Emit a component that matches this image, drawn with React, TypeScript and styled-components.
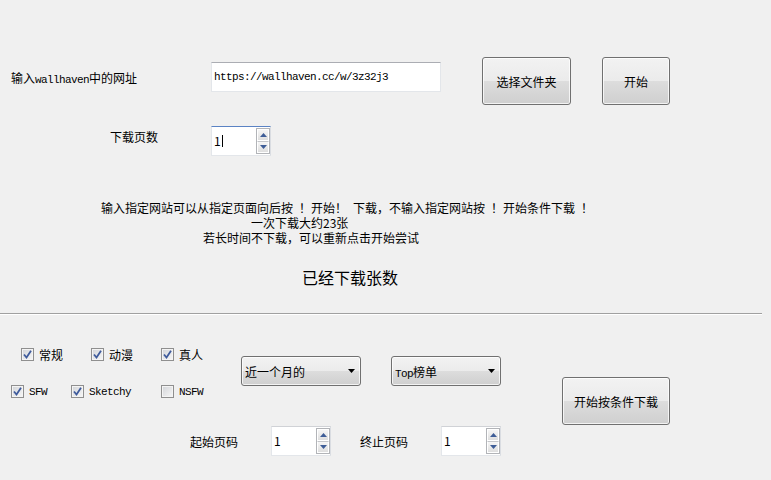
import React from 'react';
import styled, { createGlobalStyle } from 'styled-components';

const GlobalStyle = createGlobalStyle`
  html, body {
    margin: 0;
    padding: 0;
    background: #f0f0f0;
  }
  * {
    box-sizing: border-box;
  }
`

const Page = styled.div`
  width: 771px;
  height: 480px;
  overflow: hidden;
  background: #f0f0f0;
  font-family: "Noto Sans CJK SC", "Noto Sans", sans-serif;
  font-size: 12px;
  color: #000;
`

const Mono = styled.span`
  font-family: "Liberation Mono", monospace;
  font-size: 11px;
  letter-spacing: -0.6px;
`

const TopSection = styled.section`
  padding-top: 57px;
`

const Row = styled.div<{ $top?: number; $indent?: number; $align?: string }>`
  display: flex;
  align-items: ${p => p.$align || 'flex-start'};
  margin-top: ${p => p.$top || 0}px;
  padding-left: ${p => p.$indent || 0}px;
`

const FieldLabel = styled.span<{ $width: number; $indent?: number; $top?: number; $gap?: number }>`
  width: ${p => p.$width}px;
  padding-left: ${p => p.$indent || 0}px;
  margin-top: ${p => p.$top || 0}px;
  margin-left: ${p => p.$gap || 0}px;
  line-height: 16px;
  white-space: nowrap;
  flex-shrink: 0;
`

const UrlInput = styled.input`
  width: 230px;
  height: 30px;
  margin: 5px 0 0;
  padding: 0 2px;
  background: #fff;
  border: 1px solid #e3e6ea;
  border-top-color: #abadb3;
  font-family: "Liberation Mono", monospace;
  font-size: 11px;
  letter-spacing: -0.6px;
  color: #000;
  outline: none;
`

const WinButton = styled.button<{ $width: number; $gap?: number; $top?: number }>`
  width: ${p => p.$width}px;
  height: 48px;
  margin-left: ${p => p.$gap || 0}px;
  margin-top: ${p => p.$top || 0}px;
  padding: 0;
  flex-shrink: 0;
  border: 1px solid #707070;
  border-radius: 3px;
  background: linear-gradient(#f2f2f2 0%, #ebebeb 50%, #dddddd 50%, #cfcfcf 100%);
  box-shadow: inset 0 0 0 1px rgba(255, 255, 255, 0.75);
  font-family: "Noto Sans CJK SC", sans-serif;
  font-size: 12px;
  color: #000;
`

const Numeric = styled.div<{ $focused?: boolean; $gap?: number }>`
  display: flex;
  width: 60px;
  height: 30px;
  margin-left: ${p => p.$gap || 0}px;
  flex-shrink: 0;
  background: #fff;
  border: 1px solid #e3e6ea;
  border-top-color: ${p => (p.$focused ? '#5b83c4' : '#d0d2d6')};
  border-right-color: #dadde2;
`

const NumericValue = styled.div`
  flex: 1;
  display: flex;
  align-items: center;
  padding-left: 2px;
  line-height: 14px;
`

const Caret = styled.span`
  display: inline-block;
  width: 1px;
  height: 12px;
  background: #000;
  margin-left: 1px;
`

const SpinColumn = styled.div`
  display: flex;
  flex-direction: column;
  width: 14px;
  margin: 1px 0 1px 0;
  border: 1px solid #b2b4b8;
`

const SpinButton = styled.div`
  flex: 1;
  display: flex;
  align-items: center;
  justify-content: center;
  background: linear-gradient(#f6f6f6, #dedede);
  border: 1px solid #fff;
  & + & {
    border-top: 1px solid #c4c6ca;
  }
`

const Notice = styled.div`
  margin-top: 44px;
  line-height: 15px;
`

const NoticeLine = styled.div<{ $indent: number }>`
  padding-left: ${p => p.$indent}px;
  white-space: pre;
  word-spacing: 3.3px;
`

const Count = styled.div`
  margin-top: 22px;
  padding-left: 302px;
  font-size: 16px;
  line-height: 20px;
`

const Separator = styled.hr`
  width: 762px;
  margin: 26px 0 0;
  height: 0;
  border: 0;
  border-top: 1px solid #a0a0a0;
  border-bottom: 1px solid #fff;
`

const FilterRow = styled.div`
  display: flex;
  align-items: flex-start;
  margin-top: 30px;
`

const CheckGroup = styled.div`
  display: flex;
  flex-direction: column;
  gap: 18px;
  width: 241px;
  flex-shrink: 0;
`

const CheckItem = styled.label<{ $width: number }>`
  display: flex;
  align-items: center;
  gap: 5px;
  width: ${p => p.$width}px;
  height: 19px;
  flex-shrink: 0;
  white-space: nowrap;
`

const CheckBox = styled.span`
  display: flex;
  align-items: center;
  justify-content: center;
  width: 13px;
  height: 13px;
  border: 1px solid #8f8f8f;
  background: linear-gradient(135deg, #d2d4d8, #f7f7f7);
  box-shadow: inset 0 0 0 1px #f4f4f4;
`

const Combo = styled.div<{ $width: number; $gap?: number }>`
  display: flex;
  align-items: center;
  justify-content: space-between;
  width: ${p => p.$width}px;
  height: 30px;
  margin-top: 11px;
  margin-left: ${p => p.$gap || 0}px;
  padding: 0 5px 0 3px;
  flex-shrink: 0;
  border: 1px solid #707070;
  border-radius: 3px;
  background: linear-gradient(#f2f2f2 0%, #ebebeb 50%, #dddddd 50%, #cfcfcf 100%);
  box-shadow: inset 0 0 0 1px rgba(255, 255, 255, 0.75);
  white-space: nowrap;
`

const Check = ({ on }: { on: boolean }) => (
  <CheckBox>
    {on && (
      <svg width="9" height="9" viewBox="0 0 9 9">
        <path d="M1 4.5 L3.5 7.5 L8 0.8" fill="none" stroke="#3f5b9c" strokeWidth="1.8" />
      </svg>
    )}
  </CheckBox>
)

const Arrow = ({ up }: { up?: boolean }) => (
  <svg width="7" height="4" viewBox="0 0 7 4">
    <polygon points={up ? '0,4 7,4 3.5,0' : '0,0 7,0 3.5,4'} fill="#3e5d97" />
  </svg>
)

const Spinner = ({ value, focused, gap }: { value: string; focused?: boolean; gap?: number }) => (
  <Numeric $focused={focused} $gap={gap}>
    <NumericValue>
      {value}
      {focused && <Caret />}
    </NumericValue>
    <SpinColumn>
      <SpinButton><Arrow up /></SpinButton>
      <SpinButton><Arrow /></SpinButton>
    </SpinColumn>
  </Numeric>
)

const ComboArrow = () => (
  <svg width="7" height="4" viewBox="0 0 7 4">
    <polygon points="0,0 7,0 3.5,4" fill="#000" />
  </svg>
)

export default function App() {
  return (
    <Page>
      <GlobalStyle />
      <TopSection>
        <Row>
          <FieldLabel $width={211} $indent={11} $top={13}>
            输入<Mono>wallhaven</Mono>中的网址
          </FieldLabel>
          <UrlInput readOnly defaultValue="https://wallhaven.cc/w/3z32j3" />
          <WinButton $width={89} $gap={41}>选择文件夹</WinButton>
          <WinButton $width={68} $gap={31}>开始</WinButton>
        </Row>
        <Row $top={21}>
          <FieldLabel $width={211} $indent={110} $top={3}>下载页数</FieldLabel>
          <Spinner value="1" focused />
        </Row>
        <Notice>
          <NoticeLine $indent={101}>输入指定网站可以从指定页面向后按 ！开始！ 下载，不输入指定网站按 ！开始条件下载 ！</NoticeLine>
          <NoticeLine $indent={251}>一次下载大约23张</NoticeLine>
          <NoticeLine $indent={203}>若长时间不下载，可以重新点击开始尝试</NoticeLine>
        </Notice>
        <Count>已经下载张数</Count>
        <Separator />
      </TopSection>
      <FilterRow>
        <CheckGroup>
          <Row $indent={21}>
            <CheckItem $width={70}><Check on />常规</CheckItem>
            <CheckItem $width={70}><Check on />动漫</CheckItem>
            <CheckItem $width={60}><Check on />真人</CheckItem>
          </Row>
          <Row $indent={11}>
            <CheckItem $width={60}><Check on /><Mono>SFW</Mono></CheckItem>
            <CheckItem $width={90}><Check on /><Mono>Sketchy</Mono></CheckItem>
            <CheckItem $width={60}><Check on={false} /><Mono>NSFW</Mono></CheckItem>
          </Row>
        </CheckGroup>
        <Combo $width={120}>近一个月的<ComboArrow /></Combo>
        <Combo $width={110} $gap={30}><span><Mono>Top</Mono>榜单</span><ComboArrow /></Combo>
        <WinButton $width={108} $gap={61} $top={32}>开始按条件下载</WinButton>
      </FilterRow>
      <Row $top={1} $indent={190} $align="center">
        <FieldLabel $width={81} $top={2}>起始页码</FieldLabel>
        <Spinner value="1" />
        <FieldLabel $width={81} $gap={29} $top={2}>终止页码</FieldLabel>
        <Spinner value="1" />
      </Row>
    </Page>
  );
}
